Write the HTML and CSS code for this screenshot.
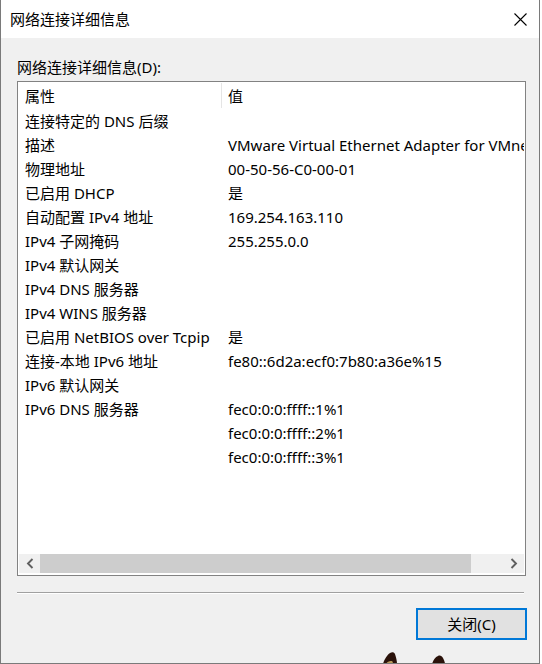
FILE: index.html
```html
<!DOCTYPE html>
<html lang="zh-CN">
<head>
<meta charset="utf-8">
<title>网络连接详细信息</title>
<link rel="stylesheet" href="styles.css">
</head>
<body>
<div class="window">
  <div class="titlebar">
    <span class="title">网络连接详细信息</span>
    <svg class="close" width="13" height="13" viewBox="0 0 13 13">
      <path d="M0.5 0.5 L12.5 12.5 M12.5 0.5 L0.5 12.5" stroke="#000" stroke-width="1.1" fill="none"/>
    </svg>
  </div>
  <div class="content">
    <div class="label">网络连接详细信息(D):</div>
    <div class="listbox">
      <div class="list">
        <div class="header">
          <div class="hcell first">属性</div>
          <div class="hsep"></div>
          <div class="hcell">值</div>
        </div>
        <div class="row"><div class="cell">连接特定的 DNS 后缀</div><div class="cell"></div></div>
        <div class="row"><div class="cell">描述</div><div class="cell">VMware Virtual Ethernet Adapter for VMnet1</div></div>
        <div class="row"><div class="cell">物理地址</div><div class="cell">00-50-56-C0-00-01</div></div>
        <div class="row"><div class="cell">已启用 DHCP</div><div class="cell">是</div></div>
        <div class="row"><div class="cell">自动配置 IPv4 地址</div><div class="cell">169.254.163.110</div></div>
        <div class="row"><div class="cell">IPv4 子网掩码</div><div class="cell">255.255.0.0</div></div>
        <div class="row"><div class="cell">IPv4 默认网关</div><div class="cell"></div></div>
        <div class="row"><div class="cell">IPv4 DNS 服务器</div><div class="cell"></div></div>
        <div class="row"><div class="cell">IPv4 WINS 服务器</div><div class="cell"></div></div>
        <div class="row"><div class="cell">已启用 NetBIOS over Tcpip</div><div class="cell">是</div></div>
        <div class="row"><div class="cell">连接-本地 IPv6 地址</div><div class="cell">fe80::6d2a:ecf0:7b80:a36e%15</div></div>
        <div class="row"><div class="cell">IPv6 默认网关</div><div class="cell"></div></div>
        <div class="row"><div class="cell">IPv6 DNS 服务器</div><div class="cell">fec0:0:0:ffff::1%1</div></div>
        <div class="row"><div class="cell"></div><div class="cell">fec0:0:0:ffff::2%1</div></div>
        <div class="row"><div class="cell"></div><div class="cell">fec0:0:0:ffff::3%1</div></div>
      </div>
      <div class="hscroll">
        <div class="sbtn">
          <svg width="8" height="11" viewBox="0 0 8 11"><path d="M6.5 1 L2 5.5 L6.5 10" stroke="#606060" stroke-width="1.9" fill="none"/></svg>
        </div>
        <div class="thumb"></div>
        <div class="track"></div>
        <div class="sbtn">
          <svg width="8" height="11" viewBox="0 0 8 11"><path d="M1.5 1 L6 5.5 L1.5 10" stroke="#606060" stroke-width="1.9" fill="none"/></svg>
        </div>
      </div>
    </div>
    <div class="divider"></div>
    <div class="footer">
      <button class="btn">关闭(C)</button>
    </div>
  </div>
  <svg class="ears" width="66" height="12" viewBox="0 0 66 12">
    <path d="M0 12 C1 8 4 3 7 1 C9 0 11 0 12 2 C13 5 14 9 14 12 Z" fill="#2a120a"/>
    <path d="M3 12 C4 10 6 9 9 9 C10 10 10 11 10 12 Z" fill="#b89a5a"/>
    <path d="M49 12 C50 9 52 5 55 4 C57 3 59 4 60 6 C61 8 62 10 62 12 Z" fill="#2a120a"/>
  </svg>
</div>
</body>
</html>
```
FILE: styles.css
```css
* { box-sizing: border-box; }
html, body { margin: 0; padding: 0; background: #ffffff; }
body {
  font-family: "Noto Sans", "Noto Sans CJK SC", sans-serif;
  font-size: 15px;
  color: #000;
}
.window {
  position: relative;
  width: 540px;
  height: 664px;
  border-left: 1px solid #7a7a7a;
  border-right: 1px solid #7a7a7a;
  border-bottom: 1px solid #7a7a7a;
  background: #f0f0f0;
  display: flex;
  flex-direction: column;
  overflow: hidden;
}
.titlebar {
  height: 38px;
  background: #fff;
  display: flex;
  align-items: center;
  justify-content: space-between;
  padding: 0 12px 0 9px;
  flex: none;
}
.title { line-height: 20px; }
.close { display: block; }
.content {
  flex: 1;
  padding: 19px 0 0 16px;
  display: flex;
  flex-direction: column;
}
.label { line-height: 20px; margin-bottom: 4px; }
.listbox {
  width: 509px;
  height: 495px;
  border: 1px solid #828282;
  background: #fff;
  padding: 1px 1px 2px 1px;
  display: flex;
  flex-direction: column;
}
.list {
  flex: 1;
  overflow: hidden;
  white-space: nowrap;
}
.header {
  height: 26px;
  display: flex;
  align-items: flex-start;
}
.hcell {
  line-height: 27px;
  padding-left: 6px;
}
.hcell.first { width: 202px; }
.hsep {
  width: 1px;
  height: 25px;
  background: #e5e5e5;
}
.row {
  height: 24px;
  display: grid;
  grid-template-columns: 203px auto;
  line-height: 24px;
}
.cell { padding-left: 6px; white-space: nowrap; }
.hscroll {
  height: 19px;
  display: flex;
  background: #f0f0f0;
  flex: none;
}
.sbtn {
  width: 21px;
  display: flex;
  align-items: center;
  justify-content: center;
}
.thumb {
  width: 431px;
  background: #cdcdcd;
}
.track { flex: 1; }
.divider {
  width: 507px;
  margin-top: 16px;
  border-top: 1px solid #a0a0a0;
  border-bottom: 1px solid #ffffff;
}
.footer {
  display: flex;
  justify-content: flex-end;
  padding-right: 12px;
  margin-top: 14px;
}
.btn {
  width: 111px;
  height: 32px;
  border: 2px solid #0078d7;
  background: #e1e1e1;
  font-family: "Noto Sans", "Noto Sans CJK SC", sans-serif;
  font-size: 15px;
  color: #000;
  padding: 0;
  line-height: 26px;
}
.ears {
  position: absolute;
  left: 382px;
  top: 652px;
}
```
